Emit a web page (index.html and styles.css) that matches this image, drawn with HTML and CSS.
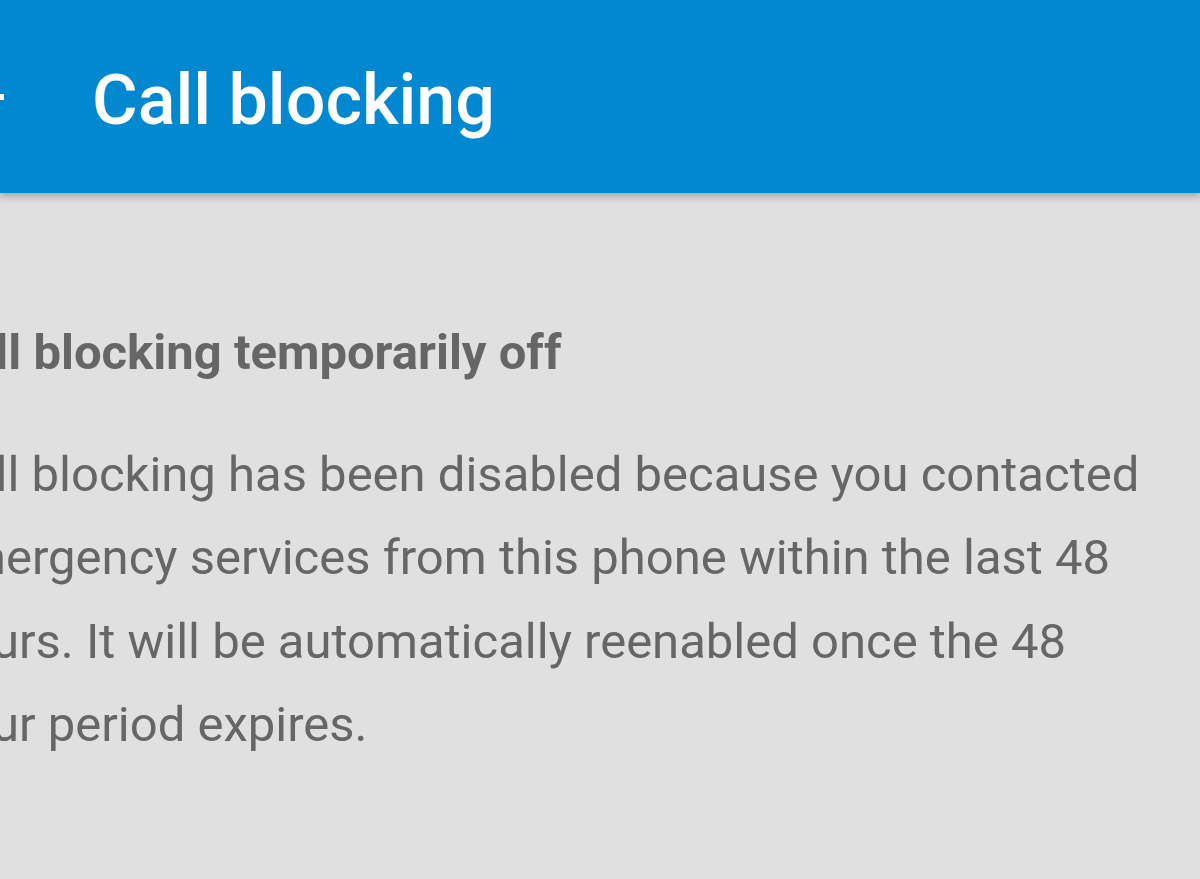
FILE: index.html
```html
<!DOCTYPE html>
<html lang="en">
<head>
<meta charset="utf-8">
<title>Call blocking</title>
<link rel="stylesheet" href="styles.css">
</head>
<body>
<div class="screen">
  <header class="appbar">
    <svg class="back" width="40" height="40" viewBox="0 0 40 40" aria-hidden="true">
      <path d="M6 20 H40" stroke="#fff" stroke-width="6" fill="none"/>
      <path d="M22 4 L6 20 L22 36" stroke="#fff" stroke-width="6" fill="none"/>
    </svg>
    <h1 class="title">Call blocking</h1>
  </header>
  <main class="content">
    <h2 class="heading">Call blocking temporarily off</h2>
    <p class="body">Call blocking has been disabled because you contacted emergency services from this phone within the last 48 hours. It will be automatically reenabled once the 48 hour period expires.</p>
  </main>
</div>
</body>
</html>
```

FILE: styles.css
```css
html, body {
  margin: 0;
  padding: 0;
  background: #e0e0e0;
  overflow: hidden;
}

.screen {
  width: 1200px;
  height: 879px;
  overflow: hidden;
  font-family: Roboto, "Noto Sans", sans-serif;
}

.appbar {
  height: 193px;
  background: #0288d1;
  display: flex;
  align-items: center;
  box-shadow: 0 3px 8px rgba(0, 0, 0, 0.3);
  position: relative;
  z-index: 1;
}

.back {
  flex: none;
  margin-left: -36px;
  margin-top: 0;
}

.title {
  margin: 6px 0 0 88px;
  font-size: 70px;
  font-weight: 500;
  color: #ffffff;
  line-height: 1;
}

.content {
  margin-left: -63px;
  width: 1230px;
  padding-top: 130px;
  color: #666666;
}

.heading {
  margin: 0;
  font-size: 49px;
  font-weight: 700;
  line-height: 60px;
}

.body {
  margin: 50px 0 0 0;
  font-size: 49px;
  font-weight: 400;
  line-height: 83.3px;
}
```
